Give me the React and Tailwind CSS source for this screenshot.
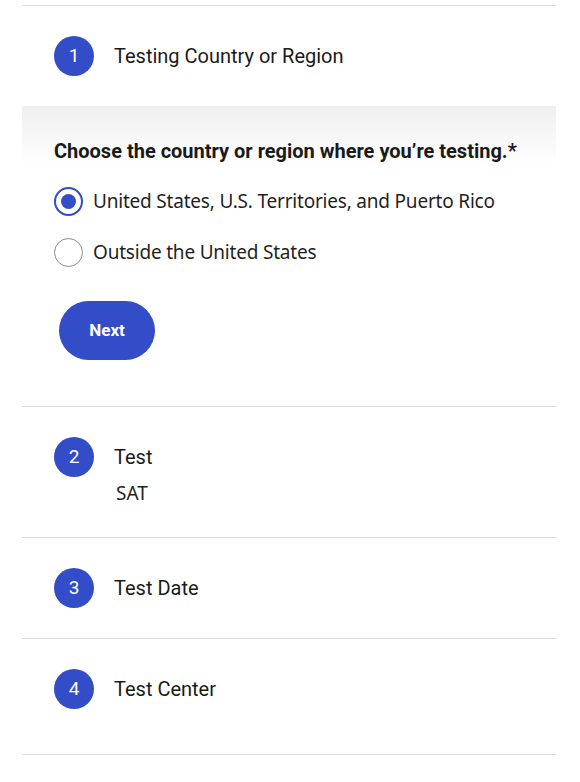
import React, { useState } from 'react';

const roboto = { fontFamily: 'Roboto, "Liberation Sans", sans-serif' };

function StepBadge({ n }) {
    return (
        <div className="w-10 h-10 rounded-full bg-[#324dc7] text-white flex items-center justify-center text-[19px] shrink-0">
            {n}
        </div>
    );
}

function Radio({ checked, label, onClick }) {
    return (
        <button type="button" onClick={onClick} className="flex items-center gap-[10px] h-[30px] text-left">
            <span
                className={`w-[29px] h-[29px] rounded-full flex items-center justify-center bg-white ${checked ? 'border-2 border-[#324dc7]' : 'border border-[#8a8a8a]'}`}
            >
                {checked && <span className="w-[15px] h-[15px] rounded-full bg-[#324dc7]" />}
            </span>
            <span className="text-[19px] text-[#1f1f1f] font-['Noto_Sans',sans-serif] tracking-[-0.2px]">{label}</span>
        </button>
    );
}

export default function App() {
    const [country, setCountry] = useState('us');

    return (
        <div className="bg-white w-[580px] min-h-[782px] pt-[5px]" style={roboto}>
            <div className="ml-[22px] w-[534px] border-t border-[#dcdcdc]">
                {/* step 1 */}
                <div className="flex items-center gap-5 pl-8 pt-[30px] pb-[30px]">
                    <StepBadge n={1} />
                    <span className="text-[20px] text-[#1a1a1a]">Testing Country or Region</span>
                </div>
                <div className="bg-gradient-to-b from-[#efefef] to-white to-[60px] px-8 pt-[34px] pb-[46px]">
                    <h2 className="text-[20px] font-bold text-[#1a1a1a] leading-[22px]">
                        Choose the country or region where you’re testing.*
                    </h2>
                    <div className="flex flex-col gap-[21px] mt-[24px]">
                        <Radio checked={country === 'us'} label="United States, U.S. Territories, and Puerto Rico" onClick={() => setCountry('us')} />
                        <Radio checked={country === 'intl'} label="Outside the United States" onClick={() => setCountry('intl')} />
                    </div>
                    <button type="button" className="mt-[34px] ml-[5px] w-[96px] h-[59px] rounded-full bg-[#324dc7] text-white font-bold text-[17px]">
                        Next
                    </button>
                </div>

                {/* step 2 */}
                <div className="border-t border-[#dcdcdc] pl-8 pt-[30px] pb-[32px]">
                    <div className="flex items-center gap-5">
                        <StepBadge n={2} />
                        <span className="text-[20px] text-[#1a1a1a]">Test</span>
                    </div>
                    <div className="pl-[62px] mt-[4px] text-[19px] text-[#1f1f1f] font-['Noto_Sans',sans-serif] leading-[24px]">SAT</div>
                </div>

                {/* step 3 */}
                <div className="border-t border-[#dcdcdc] flex items-center gap-5 pl-8 pt-[30px] pb-[30px]">
                    <StepBadge n={3} />
                    <span className="text-[20px] text-[#1a1a1a]">Test Date</span>
                </div>

                {/* step 4 */}
                <div className="border-t border-[#dcdcdc] border-b flex items-center gap-5 pl-8 pt-[30px] pb-[45px]">
                    <StepBadge n={4} />
                    <span className="text-[20px] text-[#1a1a1a]">Test Center</span>
                </div>
            </div>
        </div>
    );
}
